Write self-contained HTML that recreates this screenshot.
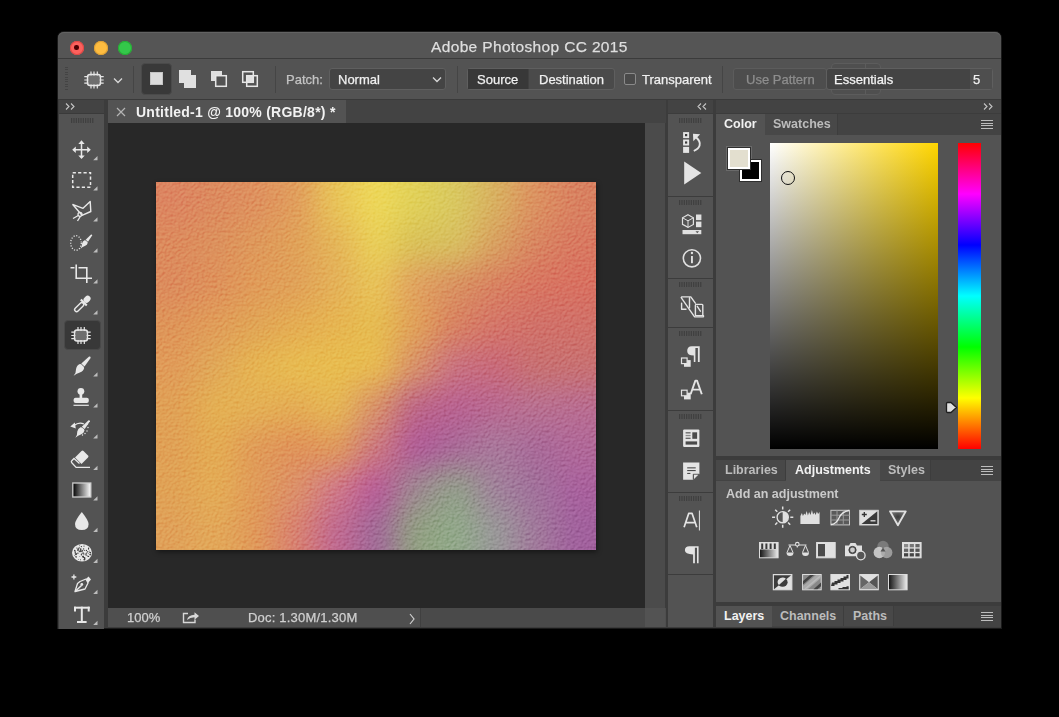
<!DOCTYPE html>
<html><head><meta charset="utf-8">
<style>
*{margin:0;padding:0;box-sizing:border-box}
html,body{width:1059px;height:717px;background:#000;overflow:hidden;font-family:"Liberation Sans",sans-serif}
.a{position:absolute}
.t{position:absolute;white-space:nowrap;line-height:1;-webkit-text-stroke:0.25px currentColor}
.t[style*="bold"]{-webkit-text-stroke:0}
.grip{position:absolute;height:5px;background:repeating-linear-gradient(90deg,#3e3e3e 0 1px,transparent 1px 2.4px)}
.hdr{position:absolute;background:#434343}
.tabrow{position:absolute;background:#434343;height:21px}
.tab{position:absolute;top:0;height:21px;font-size:13px;font-weight:bold;color:#bdbdbd;line-height:21px;text-align:center;white-space:nowrap}
.tab.on{background:#535353;color:#f0f0f0}
.menu{position:absolute;width:12px;height:9px;background:repeating-linear-gradient(180deg,#bdbdbd 0 1.3px,transparent 1.3px 2.6px)}
</style></head><body>
<!-- window frame -->
<div class="a" style="left:57px;top:31px;width:945px;height:598px;background:#1a1a1a;border-radius:7px 7px 0 0"></div>
<div class="a" style="left:58px;top:32px;width:943px;height:596px;background:#3c3c3c;border-radius:6px 6px 0 0"></div>
<!-- title bar -->
<div class="a" style="left:58px;top:32px;width:943px;height:26px;background:#555;border-radius:6px 6px 0 0;box-shadow:inset 0 1px 0 #636363"></div>
<div class="a" style="left:58px;top:58px;width:943px;height:1px;background:#3b3b3b"></div>
<div class="a" style="left:69.5px;top:40.5px;width:14px;height:14px;border-radius:50%;background:#fc615d;box-shadow:inset 0 0 0 1px #df4744"></div>
<div class="a" style="left:74.25px;top:45.25px;width:4.5px;height:4.5px;border-radius:50%;background:#4a0002"></div>
<div class="a" style="left:93.5px;top:40.5px;width:14px;height:14px;border-radius:50%;background:#fdbc40;box-shadow:inset 0 0 0 1px #dea034"></div>
<div class="a" style="left:117.5px;top:40.5px;width:14px;height:14px;border-radius:50%;background:#34c84a;box-shadow:inset 0 0 0 1px #27aa35"></div>
<div class="t" style="left:431px;top:39px;font-size:15.5px;color:#dedede;letter-spacing:0.35px">Adobe Photoshop CC 2015</div>

<!-- options bar -->
<div class="a" style="left:58px;top:59px;width:943px;height:40px;background:#535353"></div>
<div class="a" style="left:58px;top:99px;width:943px;height:1px;background:#3a3a3a"></div>


<!-- options content -->
<div class="a" style="left:65px;top:67px;width:3px;height:24px;background:repeating-linear-gradient(180deg,#444 0 1px,transparent 1px 2.4px)"></div>
<svg class="a" style="left:83px;top:70px" width="22" height="20" viewBox="0 0 22 20">
 <rect x="4.5" y="4.5" width="13" height="11" rx="2.5" fill="#6e6e6e" stroke="#e6e6e6" stroke-width="1.4"/>
 <g stroke="#e6e6e6" stroke-width="1.2">
  <path d="M8 1.5v4M11 1.5v4M14.3 1.5v4M8 14.5v4M11 14.5v4M14.3 14.5v4M1.3 6.7h4M1.3 10h4M1.3 13.2h4M16.7 6.7h4M16.7 10h4M16.7 13.2h4"/>
 </g>
</svg>
<svg class="a" style="left:113px;top:77px" width="10" height="7" viewBox="0 0 10 7"><path d="M1 1.5l4 4 4-4" fill="none" stroke="#d8d8d8" stroke-width="1.3"/></svg>
<div class="a" style="left:133px;top:66px;width:1px;height:27px;background:#454545"></div>
<div class="a" style="left:141px;top:63px;width:31px;height:32px;background:#393939;border:1px solid #4a4a4a;border-radius:4px"></div>
<div class="a" style="left:150px;top:72px;width:13px;height:13px;background:#dcdcdc;border:1px solid #c4c4c4"></div>
<svg class="a" style="left:178px;top:69px" width="20" height="20" viewBox="0 0 20 20"><path d="M1 1h12v5h5v13H6v-5H1z" fill="#e0e0e0"/></svg>
<svg class="a" style="left:209px;top:69px" width="20" height="20" viewBox="0 0 20 20"><path d="M2 2h11v4H6v6H2z" fill="#e0e0e0"/><rect x="6.7" y="6.7" width="10.6" height="10.6" fill="none" stroke="#e6e6e6" stroke-width="1.5"/></svg>
<svg class="a" style="left:240px;top:69px" width="20" height="20" viewBox="0 0 20 20"><rect x="6" y="6" width="7" height="7" fill="#e0e0e0"/><rect x="2.7" y="2.7" width="10.6" height="10.6" fill="none" stroke="#e6e6e6" stroke-width="1.5"/><rect x="6.7" y="6.7" width="10.6" height="10.6" fill="none" stroke="#e6e6e6" stroke-width="1.5"/></svg>
<div class="a" style="left:275px;top:66px;width:1px;height:27px;background:#454545"></div>
<div class="t" style="left:286px;top:73px;font-size:13px;color:#c4c4c4">Patch:</div>
<div class="a" style="left:329px;top:68px;width:117px;height:22px;background:#444;border:1px solid #5f5f5f;border-radius:3px"></div>
<div class="t" style="left:338px;top:73px;font-size:13px;color:#f0f0f0">Normal</div>
<svg class="a" style="left:432px;top:76px" width="10" height="7" viewBox="0 0 10 7"><path d="M1 1.5l4 4 4-4" fill="none" stroke="#d8d8d8" stroke-width="1.3"/></svg>
<div class="a" style="left:457px;top:66px;width:1px;height:27px;background:#454545"></div>
<div class="a" style="left:467px;top:68px;width:148px;height:22px;background:#4a4a4a;border:1px solid #5f5f5f;border-radius:3px"></div>
<div class="a" style="left:468px;top:69px;width:60px;height:20px;background:#383838"></div>
<div class="a" style="left:528px;top:69px;width:1px;height:20px;background:#404040"></div>
<div class="t" style="left:477px;top:73px;font-size:13px;color:#f0f0f0">Source</div>
<div class="t" style="left:539px;top:73px;font-size:13px;color:#f0f0f0">Destination</div>
<div class="a" style="left:624px;top:73px;width:12px;height:12px;background:#4a4a4a;border:1px solid #8a8a8a;border-radius:2px"></div>
<div class="t" style="left:642px;top:73px;font-size:13px;color:#f0f0f0">Transparent</div>
<div class="a" style="left:722px;top:66px;width:1px;height:27px;background:#454545"></div>
<div class="a" style="left:733px;top:68px;width:94px;height:22px;background:#4d4d4d;border:1px solid #5c5c5c;border-radius:3px"></div>
<div class="t" style="left:746px;top:73px;font-size:13px;color:#8e8e8e">Use Pattern</div>
<div class="a" style="left:831px;top:63px;width:50px;height:32px;background:#4f4f4f;border:1px solid #5c5c5c;border-radius:4px"></div>
<div class="a" style="left:865px;top:63px;width:1px;height:32px;background:#5c5c5c"></div>
<div class="a" style="left:826px;top:68px;width:167px;height:22px;background:#444;border:1px solid #5f5f5f;border-radius:3px"></div>
<div class="a" style="left:970px;top:69px;width:22px;height:20px;background:#4e4e4e"></div>
<div class="t" style="left:834px;top:73px;font-size:13px;color:#f4f4f4">Essentials</div>
<div class="t" style="left:973px;top:73px;font-size:13px;color:#f0f0f0">5</div>

<!-- left toolbar -->
<div class="a" style="left:58px;top:100px;width:46px;height:529px;background:#535353"></div>
<div class="hdr" style="left:58px;top:100px;width:46px;height:13px"></div>
<div class="a" style="left:58px;top:113px;width:46px;height:1px;background:#3a3a3a"></div>
<svg class="a" style="left:71px;top:118px" width="24" height="5" viewBox="0 0 24 5"><g fill="#3f3f3f"><rect x="0.00" y="0" width="1.2" height="5"/><rect x="2.35" y="0" width="1.2" height="5"/><rect x="4.70" y="0" width="1.2" height="5"/><rect x="7.05" y="0" width="1.2" height="5"/><rect x="9.40" y="0" width="1.2" height="5"/><rect x="11.75" y="0" width="1.2" height="5"/><rect x="14.10" y="0" width="1.2" height="5"/><rect x="16.45" y="0" width="1.2" height="5"/><rect x="18.80" y="0" width="1.2" height="5"/><rect x="21.15" y="0" width="1.2" height="5"/></g></svg>


<svg class="a" style="left:58px;top:99px" width="46" height="530" viewBox="58 99 46 530">
 <defs><linearGradient id="gt" x1="0" x2="1"><stop offset="0" stop-color="#000"/><stop offset="1" stop-color="#fff"/></linearGradient></defs>
 <g fill="#bdbdbd"><path d="M97.5 155.9V160.2H93.2z"/><path d="M97.5 186.2V190.5H93.2z"/><path d="M97.5 217.2V221.5H93.2z"/><path d="M97.5 248.2V252.5H93.2z"/><path d="M97.5 279.2V283.5H93.2z"/><path d="M97.5 310.2V314.5H93.2z"/><path d="M97.5 341.2V345.5H93.2z"/><path d="M97.5 372.2V376.5H93.2z"/><path d="M97.5 403.2V407.5H93.2z"/><path d="M97.5 434.2V438.5H93.2z"/><path d="M97.5 465.7V470.0H93.2z"/><path d="M97.5 496.2V500.5H93.2z"/><path d="M97.5 527.7V532.0H93.2z"/><path d="M97.5 558.7V563.0H93.2z"/><path d="M97.5 589.7V594.0H93.2z"/><path d="M97.5 620.7V625.0H93.2z"/></g>
 <!-- selected bg -->
 <rect x="64.5" y="320.5" width="36" height="29" rx="3.5" fill="#383838" stroke="#494949"/>
 <g fill="none" stroke="#e8e8e8" stroke-width="1.5">
  <!-- move -->
  <path d="M81.5 142.5v14.5M74 149.7h15"/>
  <!-- marquee -->
  <rect x="72.7" y="172.7" width="17.8" height="14.5" stroke-dasharray="3.2 2.2"/>
  <!-- poly lasso -->
  <path d="M72.5 204.3L83 208.3L90.2 201.5L90.8 211.5L82 215.3L72.5 204.3" stroke-width="1.4" stroke-linejoin="round"/>
  <circle cx="80" cy="214.3" r="2" stroke-width="1.3"/>
  <path d="M78.3 215.5L73 218.5M80.5 216.2L77.5 221" stroke-width="1.3"/>
  <!-- quick select ellipse dotted -->
  <ellipse cx="76" cy="243" rx="5.3" ry="7.3" stroke-dasharray="1.1 1.6" stroke-width="1.3"/>
  <!-- crop -->
  <path d="M70.5 267.8H74.5M76.2 264.5V278.3H92M78.5 267.8H86.8V283" stroke-width="1.6"/>
  <!-- eyedropper tube -->
  
  <!-- stamp line -->
  <path d="M73.5 405.3H88.8" stroke-width="1.2"/>
  <!-- history arc & dots -->
  <path d="M74 425.5q5-4 10-1.5" stroke-width="1.3"/>
  <path d="M87.5 424v0.1M88 427.5v0.1M87 431v0.1M85 433.5v0.1M82.5 435v0.1" stroke-width="1.4" stroke-linecap="round"/>
  <!-- eraser outline -->
  <path d="M79.5 463.5L74 458.5l-2.2 2.2q-1 1 0 2l4.3 4.7H90" stroke-width="1.3"/>
  <!-- pen -->
  <path d="M71.5 577H76.3M73.9 574.6V579.4" stroke-width="1.3"/>
  <path d="M80 581.5L86 579L88 583L85 589L75 591.5L77.5 583.5Z" stroke-width="1.3" stroke-linejoin="round"/>
  <path d="M75.5 591L81.5 585.5"/>
 </g>
 <g fill="#e8e8e8">
  <path d="M81.5 140.3l-3.2 3.6h6.4zM81.5 159.1l-3.2-3.6h6.4zM72.2 149.7l3.6-3.2v6.4zM90.8 149.7l-3.6-3.2v6.4z"/>
  <!-- quick select brush -->
  
  <!-- eyedropper bulb -->
  
  <!-- brush -->
  
  <!-- stamp -->
  <circle cx="80.9" cy="391.3" r="3.4"/>
  <rect x="79.6" y="393" width="2.6" height="5"/>
  <rect x="73.6" y="397.8" width="15.2" height="5.2" rx="2"/>
  <!-- history brush -->
  <path d="M70.3 426.5L74.8 422.5L75.8 428.5Z"/>
  
  <!-- eraser fill -->
  <path d="M75 457.5l6.5-6.5q1-1 2 0l4.5 4.5q1 1 0 2l-6.5 6.5z"/>
  <!-- drop -->
  <path d="M81.8 512q-6.8 8.5-6.8 12q0 6 6.8 6q6.8 0 6.8-6q0-3.5-6.8-12z"/>
  <!-- sponge -->
  <ellipse cx="82" cy="552.8" rx="10" ry="8.8" fill="#e8e8e8"/>
  <!-- pen fill tip -->
  <path d="M86 579L88 583L91 579.5L88.5 576.5Z"/>
  <circle cx="81.8" cy="584.5" r="1.4"/>
 </g>
 <g fill="#3a3a3a"><circle cx="75.9" cy="554.4" r="0.73"/><circle cx="76.0" cy="553.9" r="0.63"/><circle cx="84.4" cy="557.7" r="0.64"/><circle cx="82.7" cy="550.6" r="0.54"/><circle cx="88.5" cy="556.4" r="0.66"/><circle cx="90.2" cy="554.7" r="0.74"/><circle cx="78.2" cy="548.0" r="0.50"/><circle cx="88.2" cy="553.3" r="0.47"/><circle cx="83.5" cy="556.2" r="0.46"/><circle cx="76.5" cy="553.9" r="0.70"/><circle cx="75.2" cy="552.1" r="0.60"/><circle cx="79.0" cy="548.5" r="0.53"/><circle cx="90.5" cy="552.7" r="0.70"/><circle cx="80.7" cy="548.8" r="0.52"/><circle cx="81.4" cy="554.7" r="0.68"/><circle cx="75.6" cy="556.8" r="0.57"/><circle cx="89.6" cy="551.0" r="0.45"/><circle cx="84.0" cy="559.7" r="0.59"/><circle cx="87.3" cy="552.2" r="0.47"/><circle cx="76.8" cy="548.0" r="0.53"/><circle cx="86.2" cy="555.0" r="0.74"/><circle cx="82.1" cy="550.2" r="0.52"/><circle cx="83.7" cy="553.9" r="0.69"/><circle cx="84.8" cy="557.8" r="0.58"/><circle cx="84.7" cy="558.8" r="0.49"/><circle cx="80.2" cy="550.8" r="0.58"/><circle cx="83.0" cy="556.6" r="0.74"/><circle cx="83.6" cy="548.9" r="0.72"/><circle cx="83.3" cy="557.3" r="0.71"/><circle cx="80.3" cy="551.0" r="0.75"/><circle cx="83.0" cy="556.5" r="0.68"/><circle cx="79.8" cy="556.4" r="0.47"/><circle cx="87.5" cy="555.9" r="0.52"/><circle cx="77.8" cy="550.1" r="0.59"/><circle cx="87.8" cy="551.5" r="0.62"/><circle cx="84.4" cy="550.4" r="0.50"/><circle cx="88.5" cy="549.1" r="0.52"/><circle cx="84.7" cy="558.8" r="0.73"/><circle cx="84.7" cy="559.7" r="0.71"/><circle cx="77.6" cy="549.9" r="0.48"/><circle cx="90.1" cy="554.6" r="0.52"/><circle cx="80.8" cy="549.2" r="0.70"/><circle cx="78.2" cy="550.5" r="0.50"/><circle cx="81.6" cy="550.9" r="0.52"/><circle cx="74.6" cy="550.3" r="0.63"/><circle cx="80.5" cy="559.8" r="0.51"/><circle cx="86.4" cy="553.2" r="0.58"/><circle cx="85.3" cy="554.0" r="0.56"/><circle cx="79.2" cy="551.6" r="0.56"/><circle cx="88.6" cy="548.1" r="0.65"/><circle cx="79.6" cy="547.5" r="0.49"/><circle cx="83.1" cy="553.0" r="0.72"/><circle cx="79.5" cy="545.8" r="0.46"/><circle cx="78.1" cy="548.9" r="0.67"/><circle cx="78.4" cy="559.6" r="0.47"/><circle cx="75.0" cy="551.0" r="0.72"/><circle cx="81.4" cy="546.6" r="0.69"/><circle cx="86.4" cy="550.5" r="0.66"/><circle cx="88.5" cy="548.7" r="0.58"/><circle cx="84.0" cy="546.1" r="0.62"/><circle cx="78.3" cy="549.5" r="0.62"/><circle cx="80.1" cy="551.5" r="0.64"/><circle cx="90.0" cy="552.5" r="0.67"/><circle cx="76.4" cy="556.9" r="0.62"/><circle cx="74.7" cy="555.3" r="0.48"/><circle cx="82.0" cy="551.5" r="0.63"/><circle cx="77.9" cy="553.2" r="0.66"/><circle cx="75.3" cy="552.9" r="0.73"/><circle cx="82.0" cy="553.6" r="0.54"/><circle cx="80.3" cy="549.8" r="0.50"/></g>
 <rect x="72.8" y="483" width="18" height="14" fill="url(#gt)" stroke="#d0d0d0" stroke-width="1.3"/>
 <g transform="translate(86.2 241.5) rotate(-50) scale(0.8)" fill="#e8e8e8"><path d="M1.2 -1.9L10.5 -0.9Q11.6 0 10.5 0.9L1.2 1.9Z"/><path d="M-11.5 0.3Q-8 0.2 -5.5 -2.2Q-2.5 -4 0 -2.6Q1 -1.5 0.6 0Q1 1.5 0 2.6Q-2.5 4 -5.5 2.4Q-8 1 -11.5 0.3Z"/></g><g transform="translate(82 366) rotate(-48) scale(1.12)" fill="#e8e8e8"><path d="M1.2 -1.9L10.5 -0.9Q11.6 0 10.5 0.9L1.2 1.9Z"/><path d="M-11.5 0.3Q-8 0.2 -5.5 -2.2Q-2.5 -4 0 -2.6Q1 -1.5 0.6 0Q1 1.5 0 2.6Q-2.5 4 -5.5 2.4Q-8 1 -11.5 0.3Z"/></g><g transform="translate(82.5 428.8) rotate(-50) scale(1.0)" fill="#e8e8e8"><path d="M1.2 -1.9L10.5 -0.9Q11.6 0 10.5 0.9L1.2 1.9Z"/><path d="M-11.5 0.3Q-8 0.2 -5.5 -2.2Q-2.5 -4 0 -2.6Q1 -1.5 0.6 0Q1 1.5 0 2.6Q-2.5 4 -5.5 2.4Q-8 1 -11.5 0.3Z"/></g><g transform="translate(82.3 304) rotate(-45)"><rect x="-10" y="-2" width="11.2" height="4" rx="2" fill="none" stroke="#e8e8e8" stroke-width="1.4"/><rect x="1" y="-4.2" width="2.2" height="8.4" fill="#e8e8e8"/><rect x="3" y="-2.9" width="7.5" height="5.8" rx="2.9" fill="#e8e8e8"/></g>
 <!-- patch selected icon -->
 <g transform="translate(70 325.5) scale(1)">
  <rect x="4.5" y="4.5" width="13" height="11" rx="2.5" fill="#6e6e6e" stroke="#e6e6e6" stroke-width="1.4"/>
  <path d="M8 1.5v4M11 1.5v4M14.3 1.5v4M8 14.5v4M11 14.5v4M14.3 14.5v4M1.3 6.7h4M1.3 10h4M1.3 13.2h4M16.7 6.7h4M16.7 10h4M16.7 13.2h4" stroke="#e6e6e6" stroke-width="1.2"/>
 </g>
</svg>
<svg class="a" style="left:70px;top:604px" width="24" height="22" viewBox="70 604 24 22"><g fill="#e8e8e8"><rect x="74" y="606.7" width="15.7" height="2"/><rect x="74" y="606.7" width="2" height="4.8"/><rect x="87.7" y="606.7" width="2" height="4.8"/><rect x="80.8" y="606.7" width="2" height="16.3"/><rect x="77" y="621" width="9.6" height="2"/></g></svg>
<svg class="a" style="left:64px;top:102px" width="12" height="9" viewBox="0 0 12 9"><path d="M2 1.5l3 3-3 3M7 1.5l3 3-3 3" fill="none" stroke="#c4c4c4" stroke-width="1.1"/></svg>
<div class="a" style="left:58px;top:100px;width:1px;height:529px;background:#3c3c3c"></div>

<!-- doc area -->
<div class="a" style="left:108px;top:100px;width:558px;height:23px;background:#434343"></div>
<div class="a" style="left:108px;top:100px;width:238px;height:23px;background:#535353"></div>
<svg class="a" style="left:115px;top:106px" width="12" height="12" viewBox="0 0 12 12"><path d="M2 2l8 8M10 2l-8 8" stroke="#b4b4b4" stroke-width="1.2"/></svg>
<div class="t" style="left:136px;top:105px;font-size:14px;font-weight:bold;color:#f2f2f2;letter-spacing:0.25px">Untitled-1 @ 100% (RGB/8*) *</div>
<div class="a" style="left:108px;top:123px;width:537px;height:485px;background:#282828"></div>
<div class="a" style="left:645px;top:123px;width:20px;height:485px;background:#4b4b4b"></div>
<div class="a" style="left:156px;top:182px;width:440px;height:368px;box-shadow:1px 2px 5px rgba(0,0,0,0.45)"></div>
<!-- status bar -->
<div class="a" style="left:108px;top:608px;width:558px;height:19px;background:#4f4f4f"></div>
<div class="t" style="left:127px;top:611px;font-size:13px;color:#d0d0d0">100%</div>
<div class="t" style="left:248px;top:611px;font-size:13px;color:#d0d0d0;letter-spacing:0.2px">Doc: 1.30M/1.30M</div>
<svg class="a" style="left:181px;top:609px" width="20" height="16" viewBox="181 609 20 16"><path d="M188 613.5h-4.5v9h11.5v-3" fill="none" stroke="#d8d8d8" stroke-width="1.4"/><path d="M187 620q1-5 7.5-5.2v-2.6l4.5 3.8-4.5 3.8v-2.6q-4.5 0-7.5 2.8z" fill="#d8d8d8"/></svg>
<svg class="a" style="left:408px;top:613px" width="8" height="12" viewBox="0 0 8 12"><path d="M2 1l4 5-4 5" fill="none" stroke="#d0d0d0" stroke-width="1.2"/></svg>
<div class="a" style="left:420px;top:608px;width:1px;height:19px;background:#404040"></div>
<div class="a" style="left:421px;top:608px;width:224px;height:19px;background:#4a4a4a"></div>
<div class="a" style="left:645px;top:608px;width:20px;height:19px;background:#535353"></div>

<!-- canvas image -->
<!--IMG--><svg class="a" style="left:156px;top:182px" width="440" height="368" viewBox="0 0 440 368">
<defs>
<filter id="bl" x="-30%" y="-30%" width="160%" height="160%" color-interpolation-filters="sRGB"><feGaussianBlur stdDeviation="15"/></filter>
<clipPath id="cp"><rect width="440" height="368"/></clipPath>
</defs>
<g clip-path="url(#cp)"><g filter="url(#bl)"><rect x="-80.0" y="-81.8" width="40.5" height="41.4" fill="#DC8460"/><rect x="-40.0" y="-81.8" width="40.5" height="41.4" fill="#DC8460"/><rect x="0.0" y="-81.8" width="40.5" height="41.4" fill="#DC8460"/><rect x="40.0" y="-81.8" width="40.5" height="41.4" fill="#DC8A5E"/><rect x="80.0" y="-81.8" width="40.5" height="41.4" fill="#DE905E"/><rect x="120.0" y="-81.8" width="40.5" height="41.4" fill="#E09C5C"/><rect x="160.0" y="-81.8" width="40.5" height="41.4" fill="#E8C458"/><rect x="200.0" y="-81.8" width="40.5" height="41.4" fill="#EED858"/><rect x="240.0" y="-81.8" width="40.5" height="41.4" fill="#E0D058"/><rect x="280.0" y="-81.8" width="40.5" height="41.4" fill="#D8C860"/><rect x="320.0" y="-81.8" width="40.5" height="41.4" fill="#D8B060"/><rect x="360.0" y="-81.8" width="40.5" height="41.4" fill="#DC9060"/><rect x="400.0" y="-81.8" width="40.5" height="41.4" fill="#D88060"/><rect x="440.0" y="-81.8" width="40.5" height="41.4" fill="#D88060"/><rect x="480.0" y="-81.8" width="40.5" height="41.4" fill="#D88060"/><rect x="-80.0" y="-40.9" width="40.5" height="41.4" fill="#DC8460"/><rect x="-40.0" y="-40.9" width="40.5" height="41.4" fill="#DC8460"/><rect x="0.0" y="-40.9" width="40.5" height="41.4" fill="#DC8460"/><rect x="40.0" y="-40.9" width="40.5" height="41.4" fill="#DC8A5E"/><rect x="80.0" y="-40.9" width="40.5" height="41.4" fill="#DE905E"/><rect x="120.0" y="-40.9" width="40.5" height="41.4" fill="#E09C5C"/><rect x="160.0" y="-40.9" width="40.5" height="41.4" fill="#E8C458"/><rect x="200.0" y="-40.9" width="40.5" height="41.4" fill="#EED858"/><rect x="240.0" y="-40.9" width="40.5" height="41.4" fill="#E0D058"/><rect x="280.0" y="-40.9" width="40.5" height="41.4" fill="#D8C860"/><rect x="320.0" y="-40.9" width="40.5" height="41.4" fill="#D8B060"/><rect x="360.0" y="-40.9" width="40.5" height="41.4" fill="#DC9060"/><rect x="400.0" y="-40.9" width="40.5" height="41.4" fill="#D88060"/><rect x="440.0" y="-40.9" width="40.5" height="41.4" fill="#D88060"/><rect x="480.0" y="-40.9" width="40.5" height="41.4" fill="#D88060"/><rect x="-80.0" y="0.0" width="40.5" height="41.4" fill="#DC8460"/><rect x="-40.0" y="0.0" width="40.5" height="41.4" fill="#DC8460"/><rect x="0.0" y="0.0" width="40.5" height="41.4" fill="#DC8460"/><rect x="40.0" y="0.0" width="40.5" height="41.4" fill="#DC8A5E"/><rect x="80.0" y="0.0" width="40.5" height="41.4" fill="#DE905E"/><rect x="120.0" y="0.0" width="40.5" height="41.4" fill="#E09C5C"/><rect x="160.0" y="0.0" width="40.5" height="41.4" fill="#E8C458"/><rect x="200.0" y="0.0" width="40.5" height="41.4" fill="#EED858"/><rect x="240.0" y="0.0" width="40.5" height="41.4" fill="#E0D058"/><rect x="280.0" y="0.0" width="40.5" height="41.4" fill="#D8C860"/><rect x="320.0" y="0.0" width="40.5" height="41.4" fill="#D8B060"/><rect x="360.0" y="0.0" width="40.5" height="41.4" fill="#DC9060"/><rect x="400.0" y="0.0" width="40.5" height="41.4" fill="#D88060"/><rect x="440.0" y="0.0" width="40.5" height="41.4" fill="#D88060"/><rect x="480.0" y="0.0" width="40.5" height="41.4" fill="#D88060"/><rect x="-80.0" y="40.9" width="40.5" height="41.4" fill="#DC8A5C"/><rect x="-40.0" y="40.9" width="40.5" height="41.4" fill="#DC8A5C"/><rect x="0.0" y="40.9" width="40.5" height="41.4" fill="#DC8A5C"/><rect x="40.0" y="40.9" width="40.5" height="41.4" fill="#DC905C"/><rect x="80.0" y="40.9" width="40.5" height="41.4" fill="#DE985A"/><rect x="120.0" y="40.9" width="40.5" height="41.4" fill="#E0A058"/><rect x="160.0" y="40.9" width="40.5" height="41.4" fill="#E4B458"/><rect x="200.0" y="40.9" width="40.5" height="41.4" fill="#EAD058"/><rect x="240.0" y="40.9" width="40.5" height="41.4" fill="#D8C058"/><rect x="280.0" y="40.9" width="40.5" height="41.4" fill="#D8C060"/><rect x="320.0" y="40.9" width="40.5" height="41.4" fill="#D8A060"/><rect x="360.0" y="40.9" width="40.5" height="41.4" fill="#D88460"/><rect x="400.0" y="40.9" width="40.5" height="41.4" fill="#D87860"/><rect x="440.0" y="40.9" width="40.5" height="41.4" fill="#D87860"/><rect x="480.0" y="40.9" width="40.5" height="41.4" fill="#D87860"/><rect x="-80.0" y="81.8" width="40.5" height="41.4" fill="#DC8A5C"/><rect x="-40.0" y="81.8" width="40.5" height="41.4" fill="#DC8A5C"/><rect x="0.0" y="81.8" width="40.5" height="41.4" fill="#DC8A5C"/><rect x="40.0" y="81.8" width="40.5" height="41.4" fill="#DE905A"/><rect x="80.0" y="81.8" width="40.5" height="41.4" fill="#E09A58"/><rect x="120.0" y="81.8" width="40.5" height="41.4" fill="#E0A058"/><rect x="160.0" y="81.8" width="40.5" height="41.4" fill="#E4B058"/><rect x="200.0" y="81.8" width="40.5" height="41.4" fill="#E8C458"/><rect x="240.0" y="81.8" width="40.5" height="41.4" fill="#E0A060"/><rect x="280.0" y="81.8" width="40.5" height="41.4" fill="#D89060"/><rect x="320.0" y="81.8" width="40.5" height="41.4" fill="#D88060"/><rect x="360.0" y="81.8" width="40.5" height="41.4" fill="#D87460"/><rect x="400.0" y="81.8" width="40.5" height="41.4" fill="#D87060"/><rect x="440.0" y="81.8" width="40.5" height="41.4" fill="#D87060"/><rect x="480.0" y="81.8" width="40.5" height="41.4" fill="#D87060"/><rect x="-80.0" y="122.7" width="40.5" height="41.4" fill="#DE9458"/><rect x="-40.0" y="122.7" width="40.5" height="41.4" fill="#DE9458"/><rect x="0.0" y="122.7" width="40.5" height="41.4" fill="#DE9458"/><rect x="40.0" y="122.7" width="40.5" height="41.4" fill="#E09C58"/><rect x="80.0" y="122.7" width="40.5" height="41.4" fill="#E0A455"/><rect x="120.0" y="122.7" width="40.5" height="41.4" fill="#E4AC52"/><rect x="160.0" y="122.7" width="40.5" height="41.4" fill="#E6B450"/><rect x="200.0" y="122.7" width="40.5" height="41.4" fill="#E6BC50"/><rect x="240.0" y="122.7" width="40.5" height="41.4" fill="#E0A058"/><rect x="280.0" y="122.7" width="40.5" height="41.4" fill="#D88060"/><rect x="320.0" y="122.7" width="40.5" height="41.4" fill="#D47468"/><rect x="360.0" y="122.7" width="40.5" height="41.4" fill="#D07068"/><rect x="400.0" y="122.7" width="40.5" height="41.4" fill="#D07068"/><rect x="440.0" y="122.7" width="40.5" height="41.4" fill="#D07068"/><rect x="480.0" y="122.7" width="40.5" height="41.4" fill="#D07068"/><rect x="-80.0" y="163.6" width="40.5" height="41.4" fill="#E09A58"/><rect x="-40.0" y="163.6" width="40.5" height="41.4" fill="#E09A58"/><rect x="0.0" y="163.6" width="40.5" height="41.4" fill="#E09A58"/><rect x="40.0" y="163.6" width="40.5" height="41.4" fill="#E0A858"/><rect x="80.0" y="163.6" width="40.5" height="41.4" fill="#E6B450"/><rect x="120.0" y="163.6" width="40.5" height="41.4" fill="#E8BC50"/><rect x="160.0" y="163.6" width="40.5" height="41.4" fill="#E8BC4E"/><rect x="200.0" y="163.6" width="40.5" height="41.4" fill="#E8BC50"/><rect x="240.0" y="163.6" width="40.5" height="41.4" fill="#D89068"/><rect x="280.0" y="163.6" width="40.5" height="41.4" fill="#C87080"/><rect x="320.0" y="163.6" width="40.5" height="41.4" fill="#C86878"/><rect x="360.0" y="163.6" width="40.5" height="41.4" fill="#C87070"/><rect x="400.0" y="163.6" width="40.5" height="41.4" fill="#C87070"/><rect x="440.0" y="163.6" width="40.5" height="41.4" fill="#C87070"/><rect x="480.0" y="163.6" width="40.5" height="41.4" fill="#C87070"/><rect x="-80.0" y="204.4" width="40.5" height="41.4" fill="#E0A055"/><rect x="-40.0" y="204.4" width="40.5" height="41.4" fill="#E0A055"/><rect x="0.0" y="204.4" width="40.5" height="41.4" fill="#E0A055"/><rect x="40.0" y="204.4" width="40.5" height="41.4" fill="#E4B052"/><rect x="80.0" y="204.4" width="40.5" height="41.4" fill="#E4B054"/><rect x="120.0" y="204.4" width="40.5" height="41.4" fill="#E4AC54"/><rect x="160.0" y="204.4" width="40.5" height="41.4" fill="#E6B854"/><rect x="200.0" y="204.4" width="40.5" height="41.4" fill="#D89068"/><rect x="240.0" y="204.4" width="40.5" height="41.4" fill="#BC6488"/><rect x="280.0" y="204.4" width="40.5" height="41.4" fill="#B86090"/><rect x="320.0" y="204.4" width="40.5" height="41.4" fill="#B86890"/><rect x="360.0" y="204.4" width="40.5" height="41.4" fill="#B87090"/><rect x="400.0" y="204.4" width="40.5" height="41.4" fill="#B86C90"/><rect x="440.0" y="204.4" width="40.5" height="41.4" fill="#B86C90"/><rect x="480.0" y="204.4" width="40.5" height="41.4" fill="#B86C90"/><rect x="-80.0" y="245.3" width="40.5" height="41.4" fill="#E0A055"/><rect x="-40.0" y="245.3" width="40.5" height="41.4" fill="#E0A055"/><rect x="0.0" y="245.3" width="40.5" height="41.4" fill="#E0A055"/><rect x="40.0" y="245.3" width="40.5" height="41.4" fill="#E4AC52"/><rect x="80.0" y="245.3" width="40.5" height="41.4" fill="#E09A58"/><rect x="120.0" y="245.3" width="40.5" height="41.4" fill="#E09058"/><rect x="160.0" y="245.3" width="40.5" height="41.4" fill="#E09A5A"/><rect x="200.0" y="245.3" width="40.5" height="41.4" fill="#CC7880"/><rect x="240.0" y="245.3" width="40.5" height="41.4" fill="#B05898"/><rect x="280.0" y="245.3" width="40.5" height="41.4" fill="#A86898"/><rect x="320.0" y="245.3" width="40.5" height="41.4" fill="#A8789A"/><rect x="360.0" y="245.3" width="40.5" height="41.4" fill="#A86898"/><rect x="400.0" y="245.3" width="40.5" height="41.4" fill="#B06898"/><rect x="440.0" y="245.3" width="40.5" height="41.4" fill="#B06898"/><rect x="480.0" y="245.3" width="40.5" height="41.4" fill="#B06898"/><rect x="-80.0" y="286.2" width="40.5" height="41.4" fill="#E0A255"/><rect x="-40.0" y="286.2" width="40.5" height="41.4" fill="#E0A255"/><rect x="0.0" y="286.2" width="40.5" height="41.4" fill="#E0A255"/><rect x="40.0" y="286.2" width="40.5" height="41.4" fill="#E4AC55"/><rect x="80.0" y="286.2" width="40.5" height="41.4" fill="#E09A58"/><rect x="120.0" y="286.2" width="40.5" height="41.4" fill="#DC9068"/><rect x="160.0" y="286.2" width="40.5" height="41.4" fill="#D07888"/><rect x="200.0" y="286.2" width="40.5" height="41.4" fill="#B85898"/><rect x="240.0" y="286.2" width="40.5" height="41.4" fill="#9C8890"/><rect x="280.0" y="286.2" width="40.5" height="41.4" fill="#90A088"/><rect x="320.0" y="286.2" width="40.5" height="41.4" fill="#A0809A"/><rect x="360.0" y="286.2" width="40.5" height="41.4" fill="#A0709A"/><rect x="400.0" y="286.2" width="40.5" height="41.4" fill="#A8609C"/><rect x="440.0" y="286.2" width="40.5" height="41.4" fill="#A8609C"/><rect x="480.0" y="286.2" width="40.5" height="41.4" fill="#A8609C"/><rect x="-80.0" y="327.1" width="40.5" height="41.4" fill="#E0A058"/><rect x="-40.0" y="327.1" width="40.5" height="41.4" fill="#E0A058"/><rect x="0.0" y="327.1" width="40.5" height="41.4" fill="#E0A058"/><rect x="40.0" y="327.1" width="40.5" height="41.4" fill="#E2A858"/><rect x="80.0" y="327.1" width="40.5" height="41.4" fill="#E09858"/><rect x="120.0" y="327.1" width="40.5" height="41.4" fill="#D88070"/><rect x="160.0" y="327.1" width="40.5" height="41.4" fill="#C06890"/><rect x="200.0" y="327.1" width="40.5" height="41.4" fill="#A06898"/><rect x="240.0" y="327.1" width="40.5" height="41.4" fill="#90A080"/><rect x="280.0" y="327.1" width="40.5" height="41.4" fill="#90A888"/><rect x="320.0" y="327.1" width="40.5" height="41.4" fill="#989898"/><rect x="360.0" y="327.1" width="40.5" height="41.4" fill="#A0789A"/><rect x="400.0" y="327.1" width="40.5" height="41.4" fill="#A0609C"/><rect x="440.0" y="327.1" width="40.5" height="41.4" fill="#A0609C"/><rect x="480.0" y="327.1" width="40.5" height="41.4" fill="#A0609C"/><rect x="-80.0" y="368.0" width="40.5" height="41.4" fill="#E0A058"/><rect x="-40.0" y="368.0" width="40.5" height="41.4" fill="#E0A058"/><rect x="0.0" y="368.0" width="40.5" height="41.4" fill="#E0A058"/><rect x="40.0" y="368.0" width="40.5" height="41.4" fill="#E2A858"/><rect x="80.0" y="368.0" width="40.5" height="41.4" fill="#E09858"/><rect x="120.0" y="368.0" width="40.5" height="41.4" fill="#D88070"/><rect x="160.0" y="368.0" width="40.5" height="41.4" fill="#C06890"/><rect x="200.0" y="368.0" width="40.5" height="41.4" fill="#A06898"/><rect x="240.0" y="368.0" width="40.5" height="41.4" fill="#90A080"/><rect x="280.0" y="368.0" width="40.5" height="41.4" fill="#90A888"/><rect x="320.0" y="368.0" width="40.5" height="41.4" fill="#989898"/><rect x="360.0" y="368.0" width="40.5" height="41.4" fill="#A0789A"/><rect x="400.0" y="368.0" width="40.5" height="41.4" fill="#A0609C"/><rect x="440.0" y="368.0" width="40.5" height="41.4" fill="#A0609C"/><rect x="480.0" y="368.0" width="40.5" height="41.4" fill="#A0609C"/><rect x="-80.0" y="408.9" width="40.5" height="41.4" fill="#E0A058"/><rect x="-40.0" y="408.9" width="40.5" height="41.4" fill="#E0A058"/><rect x="0.0" y="408.9" width="40.5" height="41.4" fill="#E0A058"/><rect x="40.0" y="408.9" width="40.5" height="41.4" fill="#E2A858"/><rect x="80.0" y="408.9" width="40.5" height="41.4" fill="#E09858"/><rect x="120.0" y="408.9" width="40.5" height="41.4" fill="#D88070"/><rect x="160.0" y="408.9" width="40.5" height="41.4" fill="#C06890"/><rect x="200.0" y="408.9" width="40.5" height="41.4" fill="#A06898"/><rect x="240.0" y="408.9" width="40.5" height="41.4" fill="#90A080"/><rect x="280.0" y="408.9" width="40.5" height="41.4" fill="#90A888"/><rect x="320.0" y="408.9" width="40.5" height="41.4" fill="#989898"/><rect x="360.0" y="408.9" width="40.5" height="41.4" fill="#A0789A"/><rect x="400.0" y="408.9" width="40.5" height="41.4" fill="#A0609C"/><rect x="440.0" y="408.9" width="40.5" height="41.4" fill="#A0609C"/><rect x="480.0" y="408.9" width="40.5" height="41.4" fill="#A0609C"/></g></g>
</svg><svg class="a" style="left:156px;top:182px;mix-blend-mode:overlay;opacity:0.3" width="440" height="368" viewBox="0 0 440 368">
<defs><filter id="tx" x="0" y="0" width="100%" height="100%" color-interpolation-filters="sRGB">
 <feTurbulence type="fractalNoise" baseFrequency="0.38" numOctaves="2" seed="7" result="n"/>
 <feColorMatrix in="n" type="matrix" values="0 0 0 0 0  0 0 0 0 0  0 0 0 0 0  1 0 0 0 0" result="a"/>
 <feDiffuseLighting in="a" surfaceScale="1.6" lighting-color="#fff" diffuseConstant="0.68"><feDistantLight azimuth="235" elevation="50"/></feDiffuseLighting>
</filter></defs>
<rect width="440" height="368" filter="url(#tx)"/>
</svg><!--/IMG-->

<!-- icon strip -->
<div class="hdr" style="left:668px;top:100px;width:45px;height:13px"></div>
<div class="a" style="left:668px;top:114px;width:45px;height:82px;background:#535353"></div>
<div class="a" style="left:668px;top:197px;width:45px;height:81px;background:#535353"></div>
<div class="a" style="left:668px;top:279px;width:45px;height:48px;background:#535353"></div>
<div class="a" style="left:668px;top:328px;width:45px;height:82px;background:#535353"></div>
<div class="a" style="left:668px;top:411px;width:45px;height:81px;background:#535353"></div>
<div class="a" style="left:668px;top:493px;width:45px;height:81px;background:#535353"></div>
<div class="a" style="left:668px;top:575px;width:45px;height:52px;background:#535353"></div>


<svg class="a" style="left:668px;top:114px" width="45" height="514" viewBox="668 114 45 514">
 <g fill="#3f3f3f"><rect x="679.00" y="118" width="1.2" height="5"/><rect x="681.35" y="118" width="1.2" height="5"/><rect x="683.70" y="118" width="1.2" height="5"/><rect x="686.05" y="118" width="1.2" height="5"/><rect x="688.40" y="118" width="1.2" height="5"/><rect x="690.75" y="118" width="1.2" height="5"/><rect x="693.10" y="118" width="1.2" height="5"/><rect x="695.45" y="118" width="1.2" height="5"/><rect x="697.80" y="118" width="1.2" height="5"/><rect x="700.15" y="118" width="1.2" height="5"/><rect x="679.00" y="200" width="1.2" height="5"/><rect x="681.35" y="200" width="1.2" height="5"/><rect x="683.70" y="200" width="1.2" height="5"/><rect x="686.05" y="200" width="1.2" height="5"/><rect x="688.40" y="200" width="1.2" height="5"/><rect x="690.75" y="200" width="1.2" height="5"/><rect x="693.10" y="200" width="1.2" height="5"/><rect x="695.45" y="200" width="1.2" height="5"/><rect x="697.80" y="200" width="1.2" height="5"/><rect x="700.15" y="200" width="1.2" height="5"/><rect x="679.00" y="282" width="1.2" height="5"/><rect x="681.35" y="282" width="1.2" height="5"/><rect x="683.70" y="282" width="1.2" height="5"/><rect x="686.05" y="282" width="1.2" height="5"/><rect x="688.40" y="282" width="1.2" height="5"/><rect x="690.75" y="282" width="1.2" height="5"/><rect x="693.10" y="282" width="1.2" height="5"/><rect x="695.45" y="282" width="1.2" height="5"/><rect x="697.80" y="282" width="1.2" height="5"/><rect x="700.15" y="282" width="1.2" height="5"/><rect x="679.00" y="331" width="1.2" height="5"/><rect x="681.35" y="331" width="1.2" height="5"/><rect x="683.70" y="331" width="1.2" height="5"/><rect x="686.05" y="331" width="1.2" height="5"/><rect x="688.40" y="331" width="1.2" height="5"/><rect x="690.75" y="331" width="1.2" height="5"/><rect x="693.10" y="331" width="1.2" height="5"/><rect x="695.45" y="331" width="1.2" height="5"/><rect x="697.80" y="331" width="1.2" height="5"/><rect x="700.15" y="331" width="1.2" height="5"/><rect x="679.00" y="414" width="1.2" height="5"/><rect x="681.35" y="414" width="1.2" height="5"/><rect x="683.70" y="414" width="1.2" height="5"/><rect x="686.05" y="414" width="1.2" height="5"/><rect x="688.40" y="414" width="1.2" height="5"/><rect x="690.75" y="414" width="1.2" height="5"/><rect x="693.10" y="414" width="1.2" height="5"/><rect x="695.45" y="414" width="1.2" height="5"/><rect x="697.80" y="414" width="1.2" height="5"/><rect x="700.15" y="414" width="1.2" height="5"/><rect x="679.00" y="496" width="1.2" height="5"/><rect x="681.35" y="496" width="1.2" height="5"/><rect x="683.70" y="496" width="1.2" height="5"/><rect x="686.05" y="496" width="1.2" height="5"/><rect x="688.40" y="496" width="1.2" height="5"/><rect x="690.75" y="496" width="1.2" height="5"/><rect x="693.10" y="496" width="1.2" height="5"/><rect x="695.45" y="496" width="1.2" height="5"/><rect x="697.80" y="496" width="1.2" height="5"/><rect x="700.15" y="496" width="1.2" height="5"/></g>
 <!-- history -->
 <g fill="#e4e4e4"><rect x="683.1" y="132.1" width="6" height="6"/><rect x="683.1" y="139.5" width="6" height="6"/><rect x="683.1" y="146.9" width="6" height="6"/>
 <path d="M684.2 161.6L701.3 173L684.2 184.5Z"/>
 <path d="M693 133.8L700.2 134.2L693.3 141.2Z"/></g>
 <g fill="#3a3a3a"><rect x="685" y="134" width="2.2" height="2.2"/><rect x="685" y="141.4" width="2.2" height="2.2"/></g>
 <path d="M696 137.3q4.8 4.2 3.6 8.2q-1 3.3-5.8 5.5" fill="none" stroke="#e4e4e4" stroke-width="1.9"/>
 <!-- 3D -->
 <path d="M688 214.8l5.4 3v6.6l-5.4 3-5.5-3v-6.6z" fill="none" stroke="#e0e0e0" stroke-width="1.2"/>
 <path d="M682.5 217.8l5.5 3 5.4-3M688 220.8v6.6" fill="none" stroke="#e0e0e0" stroke-width="1"/>
 <g fill="#e0e0e0"><rect x="696" y="214.5" width="5.4" height="5.6"/><rect x="696" y="221.6" width="5.4" height="5.6"/><rect x="682.5" y="230" width="18.8" height="4.2"/></g>
 <path d="M695.5 231.3h3.5l-1.75 2z" fill="#555"/>
 <!-- info -->
 <circle cx="691.9" cy="258.3" r="8.6" fill="none" stroke="#e0e0e0" stroke-width="1.6"/>
 <rect x="691" y="256" width="1.9" height="7.2" fill="#e0e0e0"/><circle cx="691.95" cy="253" r="1.2" fill="#e0e0e0"/>
 <!-- clone source -->
 <g fill="none" stroke="#e4e4e4" stroke-width="1.4" stroke-linejoin="round" stroke-linecap="round">
  <path d="M690.8 296.9L695.3 303.2M681.6 296.9H690.8M681.2 297.6L694.2 316.3Q694.6 316.9 695.6 316.9H702.6Q703.9 316.9 703.4 315.6"/>
  <path d="M681.6 303.2V309.3H686M689.5 297.8V307.8"/>
  <rect x="695.4" y="304.4" width="7.4" height="11.2" rx="0.8"/>
  <path d="M697.3 306.3L700.4 311.2"/>
 </g>
 <!-- para styles -->
 <g fill="#e4e4e4">
  <path d="M691.8 346.3H699.7V361.9H697.9V348H695.4V361.9H693.8V355.6Q687.2 355.6 687.2 351Q687.2 346.3 691.8 346.3Z"/>
  <rect x="684" y="360.1" width="6.7" height="6.7"/>
  <rect x="684" y="392.7" width="6.7" height="6.7"/>
 </g>
 <g fill="#555" stroke="#e4e4e4" stroke-width="1.2"><rect x="681.5" y="358" width="5.6" height="5.6"/><rect x="681.5" y="390.2" width="5.6" height="5.6"/></g>
 <path d="M690.6 394.3L695.4 380.6H697L701.8 394.3M692.4 389.6h7.8" fill="none" stroke="#e4e4e4" stroke-width="1.9" stroke-linejoin="round"/>
 <!-- layer comps -->
 <rect x="683.1" y="429.4" width="16.3" height="17.7" rx="1" fill="#e4e4e4"/>
 <g fill="#4a4a4a"><rect x="685.6" y="432.3" width="5" height="1.1"/><rect x="685.6" y="434.9" width="5" height="1.3" fill="#8a8a8a"/><rect x="685.6" y="437.7" width="5" height="1.1"/><rect x="692.3" y="432.3" width="4.8" height="6.5"/><rect x="685.6" y="441.4" width="11.5" height="3.2"/></g>
 <!-- notes -->
 <path d="M683.1 462.4h16.3v11.6l-6 5.8h-10.3z" fill="#e4e4e4"/>
 <path d="M693.2 479.6v-5.4h5.8z" fill="#555" stroke="#3c3c3c" stroke-width="0.6"/>
 <path d="M694 479v-4.2h4.3z" fill="#e4e4e4"/>
 <g fill="#4a4a4a"><rect x="687.2" y="467.3" width="8.5" height="1.1"/><rect x="687.2" y="470" width="8.5" height="1.1"/><rect x="687.2" y="472.9" width="3.2" height="1.1"/></g>
 <!-- A| -->
 <path d="M684.1 527.2L688.7 513.4H692.1L696.8 527.2M685.7 522.6h9.5" fill="none" stroke="#e4e4e4" stroke-width="1.7" stroke-linejoin="round"/>
 <rect x="698.9" y="510.5" width="1" height="20" fill="#e4e4e4"/>
 <!-- pilcrow -->
 <path d="M689.5 546.2H698.6V563.2H697V547.8H694.9V563.2H693.1V554.4Q684.9 554.4 684.9 550.3Q684.9 546.2 689.5 546.2Z" fill="#e4e4e4"/>
</svg>
<!-- strip group separators -->

<!-- right panels -->
<div class="hdr" style="left:716px;top:100px;width:285px;height:13px"></div>
<div class="tabrow" style="left:716px;top:114px;width:285px"></div>
<div class="a" style="left:716px;top:135px;width:285px;height:322px;background:#535353"></div>
<div class="tabrow" style="left:716px;top:460px;width:285px"></div>
<div class="a" style="left:716px;top:481px;width:285px;height:121px;background:#535353"></div>
<div class="tabrow" style="left:716px;top:606px;width:285px"></div>

<!-- right panel content -->
<svg class="a" style="left:696px;top:102px" width="12" height="9" viewBox="0 0 12 9"><path d="M10 1.5l-3 3 3 3M5 1.5l-3 3 3 3" fill="none" stroke="#c4c4c4" stroke-width="1.1"/></svg>
<svg class="a" style="left:982px;top:102px" width="12" height="9" viewBox="0 0 12 9"><path d="M2 1.5l3 3-3 3M7 1.5l3 3-3 3" fill="none" stroke="#c4c4c4" stroke-width="1.1"/></svg>
<!-- color tabs -->
<div class="a" style="left:716px;top:114px;width:49px;height:21px;background:#535353"></div>
<div class="a" style="left:765px;top:114px;width:73px;height:21px;background:#484848;border-right:1px solid #3d3d3d"></div>
<div class="t" style="left:724px;top:118px;font-size:12.5px;font-weight:bold;color:#f2f2f2">Color</div>
<div class="t" style="left:773px;top:118px;font-size:12.5px;font-weight:bold;color:#bcbcbc">Swatches</div>
<div class="menu" style="left:981px;top:120px"></div>
<!-- color panel -->
<div class="a" style="left:726px;top:146px;width:26px;height:25px;background:#6a6a6a"></div>
<div class="a" style="left:739px;top:159px;width:23px;height:23px;background:#2e2e2e"></div>
<div class="a" style="left:740px;top:160px;width:21px;height:21px;background:#fff"></div>
<div class="a" style="left:742px;top:162px;width:17px;height:17px;background:#000"></div>
<div class="a" style="left:727px;top:147px;width:24px;height:23px;background:#2e2e2e"></div>
<div class="a" style="left:728px;top:148px;width:22px;height:21px;background:#fff"></div>
<div class="a" style="left:730px;top:150px;width:18px;height:17px;background:#e3dfcf"></div>
<div class="a" style="left:770px;top:143px;width:168px;height:306px;background:linear-gradient(to bottom,rgba(0,0,0,0),#000),linear-gradient(to right,#fff,#ffd500)"></div>
<div class="a" style="left:781px;top:171px;width:14px;height:14px;border-radius:50%;border:1.4px solid #111"></div>
<div class="a" style="left:958px;top:143px;width:23px;height:306px;background:linear-gradient(to bottom,#f00 0%,#f0f 16.67%,#00f 33.33%,#0ff 50%,#0f0 66.67%,#ff0 83.33%,#f00 100%)"></div>
<svg class="a" style="left:945px;top:401px" width="13" height="13" viewBox="0 0 13 13"><path d="M2.5 1.5h3.5l5.5 5-5.5 5H2.5q-1 0-1-1V2.5q0-1 1-1z" fill="#e0e0e0" stroke="#1e1e1e" stroke-width="1.3" stroke-linejoin="round"/></svg>
<div class="a" style="left:716px;top:456px;width:285px;height:4px;background:#3c3c3c"></div>
<!-- adjustments tabs -->
<div class="a" style="left:716px;top:460px;width:70px;height:20px;background:#484848;border-right:1px solid #3d3d3d"></div>
<div class="a" style="left:786px;top:460px;width:94px;height:21px;background:#535353"></div>
<div class="a" style="left:880px;top:460px;width:51px;height:20px;background:#484848;border-right:1px solid #3d3d3d"></div>
<div class="t" style="left:725px;top:464px;font-size:12.5px;font-weight:bold;color:#bcbcbc">Libraries</div>
<div class="t" style="left:795px;top:464px;font-size:12.5px;font-weight:bold;color:#f2f2f2">Adjustments</div>
<div class="t" style="left:888px;top:464px;font-size:12.5px;font-weight:bold;color:#bcbcbc">Styles</div>
<div class="menu" style="left:981px;top:466px"></div>
<div class="t" style="left:726px;top:488px;font-size:12.5px;font-weight:bold;color:#cacaca">Add an adjustment</div>

<svg class="a" style="left:750px;top:505px" width="180" height="92" viewBox="750 505 180 92">
 <defs>
  <linearGradient id="g1" x1="0" x2="1"><stop offset="0" stop-color="#111"/><stop offset="1" stop-color="#eee"/></linearGradient>
  <radialGradient id="g2" cx="0.5" cy="0.4" r="0.5"><stop offset="0" stop-color="#3a3a3a"/><stop offset="1" stop-color="#777"/></radialGradient>
 </defs>
 <!-- brightness -->
 <path d="M790.30 517.20L793.30 517.20M788.07 522.57L790.20 524.70M782.70 524.80L782.70 527.80M777.33 522.57L775.20 524.70M775.10 517.20L772.10 517.20M777.33 511.83L775.20 509.70M782.70 509.60L782.70 506.60M788.07 511.83L790.20 509.70" stroke="#e0e0e0" stroke-width="1.5"/>
 <circle cx="782.7" cy="517.2" r="5.6" fill="#555" stroke="#e0e0e0" stroke-width="1.4"/>
 <path d="M782.7 511.6a5.6 5.6 0 0 1 0 11.2z" fill="#e0e0e0"/>
 <!-- levels -->
 <path d="M800.4 524V516l1.5-3 1 3 1.4-2.5 1.1 1.5 1.3-4 1.2 4.5 1.2-3.5 1.5 3 1.3-5 1.2 4.5 1.3-2 1.2 2.5 1.3-3.5 1.2 2.5 1.5-2V524z" fill="#e0e0e0"/>
 
 <!-- curves -->
 <rect x="830.9" y="510.3" width="18.6" height="14.6" fill="#5a5a5a" stroke="#c8c8c8" stroke-width="1"/>
 <path d="M837 510.3v14.6M843.3 510.3v14.6M830.9 515.2h18.6M830.9 520h18.6" stroke="#999" stroke-width="1"/>
 <path d="M831 524.5q5 0 8-6.5t10-7.5" fill="none" stroke="#e8e8e8" stroke-width="1.3"/>
 <!-- exposure -->
 <rect x="859.7" y="510.3" width="18.6" height="14.7" fill="#e0e0e0" stroke="#d0d0d0" stroke-width="1"/>
 <path d="M877.3 511.3V524H861.5z" fill="#3a3a3a"/>
 <path d="M861.8 514.5h5M864.3 512v5" stroke="#333" stroke-width="1.3"/>
 <path d="M870.5 520.8h5" stroke="#e0e0e0" stroke-width="1.3"/>
 <!-- vibrance -->
 <path d="M890 511.3h15.8l-7.9 14z" fill="url(#g2)" stroke="#e0e0e0" stroke-width="1.8" stroke-linejoin="round"/>
 <!-- row 2 -->
 <!-- hue sat -->
 <rect x="759.5" y="542.5" width="18.6" height="15.3" fill="url(#g1)" stroke="#ddd" stroke-width="1"/>
 <rect x="760" y="543" width="17.6" height="6.5" fill="#ddd"/>
 <path d="M762.2 543.5v5.5M766.4 543.5v5.5M770.6 543.5v5.5M774.8 543.5v5.5" stroke="#3a3a3a" stroke-width="2"/>
 <!-- color balance -->
 <path d="M788.5 545h18M797.3 544.5v3" stroke="#e0e0e0" stroke-width="1.2"/>
 <circle cx="797.3" cy="544.2" r="1.8" fill="#555" stroke="#e0e0e0" stroke-width="1.1"/>
 <path d="M790 545.5l-3 7M790 545.5l3 7M805.5 545.5l-3 7M805.5 545.5l3 7" stroke="#e0e0e0" stroke-width="1"/>
 <path d="M786.5 552.5h7a3.5 3.5 0 0 1-7 0zM802 552.5h7a3.5 3.5 0 0 1-7 0z" fill="#e0e0e0"/>
 <!-- b&w -->
 <rect x="816.6" y="542.5" width="18.6" height="15.3" fill="#e0e0e0" stroke="#ddd" stroke-width="1"/>
 <rect x="818" y="544" width="7" height="12.3" fill="#4a4a4a"/>
 <!-- photo filter -->
 <path d="M845 545.5h4l1.5-2.5h5l1.5 2.5h5v10.7H845z" fill="#e0e0e0"/>
 <circle cx="852.5" cy="550" r="3.6" fill="#555" stroke="#3a3a3a" stroke-width="1"/>
 <circle cx="852.5" cy="550" r="2.4" fill="#ccc"/>
 <circle cx="860.8" cy="555.5" r="4.3" fill="#555" stroke="#e0e0e0" stroke-width="1.3"/>
 <!-- channel mixer -->
 <circle cx="883" cy="546.5" r="5.7" fill="#7a7a7a"/>
 <circle cx="879.3" cy="552.5" r="5.7" fill="#d0d0d0" fill-opacity="0.9"/>
 <circle cx="886.7" cy="552.5" r="5.7" fill="#a8a8a8" fill-opacity="0.85"/>
 <path d="M883 547.5l2.5 4h-5z" fill="#555"/>
 <!-- color lookup -->
 <rect x="902.5" y="542.5" width="18.6" height="15.3" fill="#e0e0e0" stroke="#ddd" stroke-width="1"/>
 <g fill="#444"><rect x="904" y="544" width="4.2" height="3.3" fill="#888"/><rect x="909.7" y="544" width="4.2" height="3.3" fill="#777"/><rect x="915.4" y="544" width="4.2" height="3.3" fill="#666"/>
 <rect x="904" y="548.6" width="4.2" height="3.3" fill="#666"/><rect x="909.7" y="548.6" width="4.2" height="3.3" fill="#555"/><rect x="915.4" y="548.6" width="4.2" height="3.3" fill="#555"/>
 <rect x="904" y="553.2" width="4.2" height="3.3"/><rect x="909.7" y="553.2" width="4.2" height="3.3"/><rect x="915.4" y="553.2" width="4.2" height="3.3"/></g>
 <!-- row 3 -->
 <!-- invert -->
 <rect x="773.3" y="574.5" width="18.6" height="15.3" fill="#e0e0e0" stroke="#ddd" stroke-width="1"/>
 <path d="M774 575.2h17.2L774 589.2z" fill="#3c3c3c"/>
 <ellipse cx="782.6" cy="582.2" rx="5" ry="4.5" fill="#3c3c3c"/>
 <path d="M777.6 582.2a5 4.5 0 0 1 8.3-3.4L778.9 585a5 4.5 0 0 1-1.3-2.8z" fill="#e0e0e0"/>
 <!-- posterize -->
 <rect x="802.6" y="574.5" width="18.6" height="15.3" fill="#888" stroke="#ddd" stroke-width="1"/>
 <path d="M803 586l13-11h5v3l-13 11h-5z" fill="#aaa"/>
 <path d="M803 581l7-6h4l-11 9.5zM821 582.5l-7.5 6.8h4l3.5-3z" fill="#444"/>
 <path d="M805 589l16-13.5" stroke="#bbb" stroke-width="1.5"/>
 <!-- threshold -->
 <rect x="830.9" y="574.5" width="18.6" height="15.3" fill="#e0e0e0" stroke="#ddd" stroke-width="1"/>
 <path d="M832 582.5h2.5v-1.5h3v-1.5h3v-1.5h3v-1.5h3v-1.5h2v3.5h-2v1.5h-3v1.5h-3v1.5h-3v1.5h-3v1.5h-3.5z" fill="#333"/>
 <path d="M838.5 589.2v-1.3h4v-0.8h4v-0.8h2.2v2.9z" fill="#333"/>
 <!-- selective color -->
 <rect x="859.7" y="574.5" width="18.6" height="15.3" fill="#e0e0e0" stroke="#ddd" stroke-width="1"/>
 <path d="M860.3 575.5l8.7 6.7-8.7 6.7z" fill="#666"/>
 <path d="M877.7 575.5l-8.7 6.7 8.7 6.7z" fill="#555"/>
 <path d="M860.3 588.9l8.7-6.7 8.7 6.7z" fill="#999"/>
 <!-- gradient map -->
 <rect x="888.5" y="574.5" width="18.6" height="15.3" fill="url(#g1)" stroke="#ddd" stroke-width="1"/>
</svg>

<div class="a" style="left:716px;top:602px;width:285px;height:4px;background:#3c3c3c"></div>
<!-- layers tabs -->
<div class="a" style="left:716px;top:606px;width:56px;height:21px;background:#535353"></div>
<div class="a" style="left:772px;top:606px;width:72px;height:20px;background:#484848;border-right:1px solid #3d3d3d"></div>
<div class="a" style="left:844px;top:606px;width:50px;height:20px;background:#484848;border-right:1px solid #3d3d3d"></div>
<div class="t" style="left:724px;top:610px;font-size:12.5px;font-weight:bold;color:#f2f2f2">Layers</div>
<div class="t" style="left:780px;top:610px;font-size:12.5px;font-weight:bold;color:#bcbcbc">Channels</div>
<div class="t" style="left:853px;top:610px;font-size:12.5px;font-weight:bold;color:#bcbcbc">Paths</div>
<div class="menu" style="left:981px;top:612px"></div>

</body></html>
